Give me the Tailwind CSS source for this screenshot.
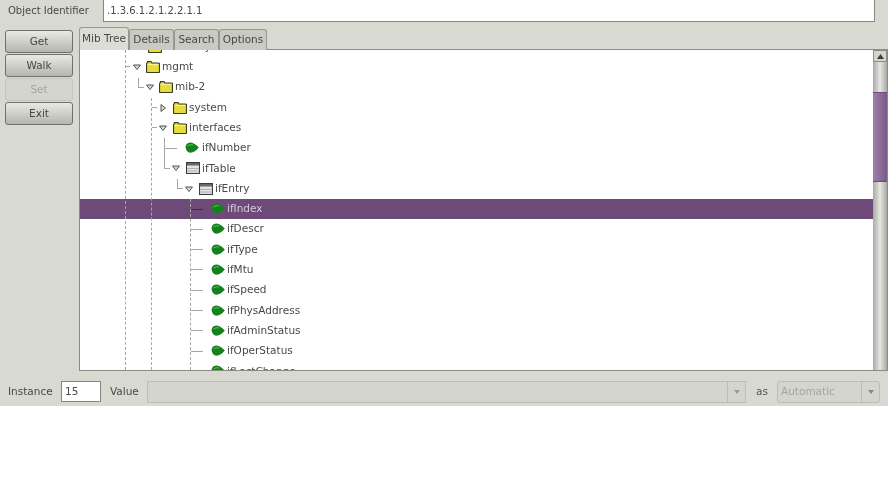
<!DOCTYPE html>
<html lang="en">
<head>
<meta charset="UTF-8">
<title>MIB Browser</title>
<script src="https://cdn.jsdelivr.net/npm/@tailwindcss/browser@4"></script>
</head>
<body class="bg-white overflow-hidden">
<svg class="hidden">
  <symbol id="folder" viewBox="0 0 14 12"><path d="M1 2 L1.5 .7 H5 L6 2 H12.5 Q13.5 2 13.5 3 V10.5 Q13.5 11.5 12.5 11.5 H1.5 Q.5 11.5 .5 10.5 V3 Z" fill="#e6dc3c" stroke="#3c3c22" stroke-width="1.2"/><path d="M1.6 3.6 H12.4" stroke="#f7f2a0"/></symbol>
  <symbol id="leaf" viewBox="0 0 14 12"><path d="M.5 5 Q1 1 5 .6 Q9 .6 13.8 5.6 Q10 10.6 5.5 10.8 Q1 10 .5 5 Z" fill="#14801e"/><path d="M2.5 4 Q5 2 8 3" stroke="#5fc25f" fill="none"/></symbol>
  <symbol id="table" viewBox="0 0 14 12"><rect x=".5" y=".5" width="13" height="11" fill="#e4e4e0" stroke="#3c3c40" stroke-width="1.1"/><rect x="1" y="1" width="12" height="2.5" fill="#66666c"/><path d="M1 6.5 H13 M1 9 H13" stroke="#b0b0b2"/></symbol>
  <symbol id="open" viewBox="0 0 10 10"><path d="M1.5 3 H8.5 L5 7.5 Z" fill="#d8dad2" stroke="#55564f"/></symbol>
  <symbol id="closed" viewBox="0 0 10 10"><path d="M3 1.5 V8.5 L7.5 5 Z" fill="#d8dad2" stroke="#55564f"/></symbol>
</svg>

<div class="blur-[0.6px] h-[406px] bg-[#d8dad2] flex flex-col overflow-hidden text-[10.5px] text-[#484844] font-['DejaVu_Sans',sans-serif]">
  <!-- oid row -->
  <div class="flex items-center h-[26px] shrink-0 -mt-[4px] pt-[2px] pl-[8px] pr-[13px]">
    <span class="w-[95px] text-[10px]">Object Identifier</span>
    <div class="flex-1 h-[24px] bg-white border border-[#85867f] pl-[3px] flex items-center text-[10px]">.1.3.6.1.2.1.2.2.1.1</div>
  </div>

  <div class="flex flex-1 min-h-0 pt-[5px]">
    <!-- side buttons -->
    <div class="w-[79px] shrink-0 pl-[5px] pr-[6px] pt-[3px] flex flex-col gap-[1px]">
      <div class="h-[23px] rounded-[3px] border border-[#6f706a] bg-gradient-to-b from-[#e9eae5] to-[#b4b6ae] flex items-center justify-center">Get</div>
      <div class="h-[23px] rounded-[3px] border border-[#6f706a] bg-gradient-to-b from-[#e9eae5] to-[#b4b6ae] flex items-center justify-center">Walk</div>
      <div class="h-[23px] rounded-[3px] border border-[#c4c6be] bg-[#d4d6ce] flex items-center justify-center text-[#a4a59e]">Set</div>
      <div class="h-[23px] rounded-[3px] border border-[#6f706a] bg-gradient-to-b from-[#e9eae5] to-[#b4b6ae] flex items-center justify-center">Exit</div>
    </div>

    <div class="flex-1 min-w-0 flex flex-col">
      <!-- tabs -->
      <div class="flex items-end h-[23px] -mb-[1px] shrink-0 relative z-10">
        <div class="w-[50px] h-[23px] bg-[#dcded6] border border-b-0 border-[#97988f] rounded-t-[3px] flex items-center justify-center">Mib Tree</div>
        <div class="w-[45px] h-[21px] bg-[#c9cbc3] border border-b-0 border-[#97988f] rounded-t-[3px] flex items-center justify-center">Details</div>
        <div class="w-[45px] h-[21px] bg-[#c9cbc3] border border-b-0 border-[#97988f] rounded-t-[3px] flex items-center justify-center">Search</div>
        <div class="w-[48px] h-[21px] bg-[#c9cbc3] border border-b-0 border-[#97988f] rounded-t-[3px] flex items-center justify-center">Options</div>
      </div>

      <!-- tree -->
      <div class="h-[322px] shrink-0 bg-white border border-[#8b8c85] flex">
        <div class="relative flex-1 min-w-0 overflow-hidden">
          <div class="absolute left-[45px] top-0 bottom-0 border-l border-dashed border-[#a6a7a2] z-10"></div>
          <div class="absolute left-[71px] top-[48px] bottom-0 border-l border-dashed border-[#a6a7a2] z-10"></div>
          <div class="absolute left-[110px] top-[149px] bottom-0 border-l border-dashed border-[#a6a7a2] z-10"></div>
          <div class="absolute left-[58px] top-[28px] h-[10px] w-[6px] border-l border-b border-[#a6a7a2] z-10"></div>
          <div class="absolute left-[84px] top-[88px] h-[31px] w-[6px] border-l border-b border-[#a6a7a2] z-10"></div>
          <div class="absolute left-[97px] top-[129px] h-[10px] w-[6px] border-l border-b border-[#a6a7a2] z-10"></div>

          <div class="-mt-[13.5px]">
            <div class="flex items-center h-[20.3px] pl-[68px] gap-[2px]"><svg class="w-[14px] h-[12px]"><use href="#folder"/></svg><span>directory</span></div>
            <div class="flex items-center h-[20.3px] pl-[46px]"><i class="w-[4px] h-px bg-[#a6a7a2] mr-[2px]"></i><svg class="w-[10px] h-[10px] mr-[4px]"><use href="#open"/></svg><svg class="w-[14px] h-[12px] mr-[2px]"><use href="#folder"/></svg><span>mgmt</span></div>
            <div class="flex items-center h-[20.3px] pl-[65px]"><svg class="w-[10px] h-[10px] mr-[4px]"><use href="#open"/></svg><svg class="w-[14px] h-[12px] mr-[2px]"><use href="#folder"/></svg><span>mib-2</span></div>
            <div class="flex items-center h-[20.3px] pl-[72px]"><i class="w-[5px] h-px bg-[#a6a7a2] mr-[1px]"></i><svg class="w-[10px] h-[10px] mr-[5px]"><use href="#closed"/></svg><svg class="w-[14px] h-[12px] mr-[2px]"><use href="#folder"/></svg><span>system</span></div>
            <div class="flex items-center h-[20.3px] pl-[72px]"><i class="w-[5px] h-px bg-[#a6a7a2] mr-[1px]"></i><svg class="w-[10px] h-[10px] mr-[5px]"><use href="#open"/></svg><svg class="w-[14px] h-[12px] mr-[2px]"><use href="#folder"/></svg><span>interfaces</span></div>
            <div class="flex items-center h-[20.3px] pl-[85px]"><i class="w-[12px] h-px bg-[#a6a7a2] mr-[8px]"></i><svg class="w-[14px] h-[12px] mr-[3px]"><use href="#leaf"/></svg><span>ifNumber</span></div>
            <div class="flex items-center h-[20.3px] pl-[91px]"><svg class="w-[10px] h-[10px] mr-[5px]"><use href="#open"/></svg><svg class="w-[14px] h-[12px] mr-[2px]"><use href="#table"/></svg><span>ifTable</span></div>
            <div class="flex items-center h-[20.3px] pl-[104px]"><svg class="w-[10px] h-[10px] mr-[5px]"><use href="#open"/></svg><svg class="w-[14px] h-[12px] mr-[2px]"><use href="#table"/></svg><span>ifEntry</span></div>
            <div class="flex items-center h-[20.3px] pl-[111px] bg-[#6d4a78] text-[#d4cad8]"><i class="w-[12px] h-px bg-[#3f2a48] mr-[8px]"></i><svg class="w-[14px] h-[12px] mr-[2px]"><use href="#leaf"/></svg><span>ifIndex</span></div>
            <div class="flex items-center h-[20.3px] pl-[111px]"><i class="w-[12px] h-px bg-[#a6a7a2] mr-[8px]"></i><svg class="w-[14px] h-[12px] mr-[2px]"><use href="#leaf"/></svg><span>ifDescr</span></div>
            <div class="flex items-center h-[20.3px] pl-[111px]"><i class="w-[12px] h-px bg-[#a6a7a2] mr-[8px]"></i><svg class="w-[14px] h-[12px] mr-[2px]"><use href="#leaf"/></svg><span>ifType</span></div>
            <div class="flex items-center h-[20.3px] pl-[111px]"><i class="w-[12px] h-px bg-[#a6a7a2] mr-[8px]"></i><svg class="w-[14px] h-[12px] mr-[2px]"><use href="#leaf"/></svg><span>ifMtu</span></div>
            <div class="flex items-center h-[20.3px] pl-[111px]"><i class="w-[12px] h-px bg-[#a6a7a2] mr-[8px]"></i><svg class="w-[14px] h-[12px] mr-[2px]"><use href="#leaf"/></svg><span>ifSpeed</span></div>
            <div class="flex items-center h-[20.3px] pl-[111px]"><i class="w-[12px] h-px bg-[#a6a7a2] mr-[8px]"></i><svg class="w-[14px] h-[12px] mr-[2px]"><use href="#leaf"/></svg><span>ifPhysAddress</span></div>
            <div class="flex items-center h-[20.3px] pl-[111px]"><i class="w-[12px] h-px bg-[#a6a7a2] mr-[8px]"></i><svg class="w-[14px] h-[12px] mr-[2px]"><use href="#leaf"/></svg><span>ifAdminStatus</span></div>
            <div class="flex items-center h-[20.3px] pl-[111px]"><i class="w-[12px] h-px bg-[#a6a7a2] mr-[8px]"></i><svg class="w-[14px] h-[12px] mr-[2px]"><use href="#leaf"/></svg><span>ifOperStatus</span></div>
            <div class="flex items-center h-[20.3px] pl-[111px]"><i class="w-[12px] h-px bg-[#a6a7a2] mr-[8px]"></i><svg class="w-[14px] h-[12px] mr-[2px]"><use href="#leaf"/></svg><span>ifLastChange</span></div>
          </div>
        </div>
        <!-- scrollbar -->
        <div class="w-[14px] shrink-0 bg-gradient-to-r from-[#a9aaa5] via-[#e6e7e2] to-[#a9aaa5] flex flex-col">
          <div class="h-[12px] bg-[#d4d6ce] border border-[#8b8c85] flex items-center justify-center"><svg class="w-[7px] h-[5px]" viewBox="0 0 7 5"><path d="M3.5 0 L7 5 H0 Z" fill="#3c3c38"/></svg></div>
          <div class="h-[30px]"></div>
          <div class="h-[90px] bg-gradient-to-r from-[#a07fad] to-[#7a5a86] border-y border-[#6d4a78]"></div>
        </div>
      </div>
    </div>
  </div>

  <!-- bottom row -->
  <div class="flex items-center h-[35px] shrink-0 pt-[6px] pl-[8px] pr-[8px]">
    <span class="w-[53px]">Instance</span>
    <div class="w-[40px] h-[21px] bg-white border border-[#85867f] pl-[3px] flex items-center">15</div>
    <span class="ml-[9px] w-[37px]">Value</span>
    <div class="w-[599px] h-[22px] border border-[#bcbeb6] bg-[#d4d6ce] flex justify-end">
      <div class="w-[18px] border-l border-[#bcbeb6] flex items-center justify-center"><svg class="w-[6px] h-[4px]" viewBox="0 0 6 4"><path d="M0 0 H6 L3 4 Z" fill="#9a9b94"/></svg></div>
    </div>
    <span class="ml-[10px] w-[21px] text-[#55564f]">as</span>
    <div class="w-[103px] h-[22px] rounded-[3px] border border-[#bcbeb6] bg-[#d4d6ce] flex items-center pl-[3px] text-[#a4a59e]">
      <span class="flex-1">Automatic</span>
      <div class="w-[18px] h-full border-l border-[#bcbeb6] flex items-center justify-center"><svg class="w-[6px] h-[4px]" viewBox="0 0 6 4"><path d="M0 0 H6 L3 4 Z" fill="#85867f"/></svg></div>
    </div>
  </div>
</div>
</body>
</html>
